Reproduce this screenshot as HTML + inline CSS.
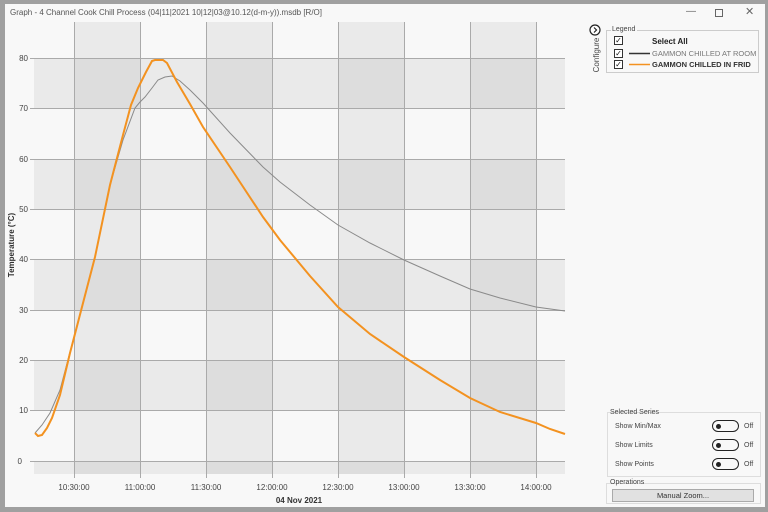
<!DOCTYPE html>
<html><head><meta charset="utf-8"><style>
*{margin:0;padding:0;box-sizing:border-box}
body{width:768px;height:512px;background:#a0a0a0;position:relative;overflow:hidden;font-family:"Liberation Sans",sans-serif}
.win{position:absolute;left:5px;top:4px;width:760px;height:503px;background:#f8f8f8}
.t{position:absolute;font-size:8px;color:#444;white-space:nowrap}
.cb{position:absolute;width:9px;height:9px;border:1px solid #333;background:#fff;font-size:8px;line-height:7px;text-align:center;color:#111}
.tog{position:absolute;width:27px;height:12px;border:1.3px solid #222;border-radius:6px}
.tog::after{content:"";position:absolute;left:3px;top:2.5px;width:5px;height:5px;border-radius:50%;background:#222}
</style></head><body>
<div class="win"></div>
<div class="t" style="left:10px;top:8px;color:#555">Graph - 4 Channel Cook Chill Process (04|11|2021 10|12|03@10.12(d-m-y)).msdb [R/O]</div>
<div class="t" style="left:686px;top:6px;font-size:10px;color:#666">—</div>
<div class="t" style="left:715px;top:5px;width:8px;height:8px;border:1px solid #666;top:9px"></div>
<div class="t" style="left:745px;top:5px;font-size:11px;color:#666">✕</div>
<svg width="768" height="512" style="position:absolute;left:0;top:0">
<g fill="rgba(0,0,0,0.055)">
<rect x="74" y="22" width="66" height="452"/><rect x="206" y="22" width="66" height="452"/><rect x="338" y="22" width="66" height="452"/><rect x="470" y="22" width="66" height="452"/>
<rect x="34" y="58" width="531" height="50"/><rect x="34" y="159" width="531" height="50"/><rect x="34" y="259" width="531" height="51"/><rect x="34" y="360" width="531" height="50"/><rect x="34" y="461" width="531" height="13"/>
</g>
<g stroke="#aaa" stroke-width="1">
<line x1="74.5" y1="22" x2="74.5" y2="478"/><line x1="140.5" y1="22" x2="140.5" y2="478"/><line x1="206.5" y1="22" x2="206.5" y2="478"/><line x1="272.5" y1="22" x2="272.5" y2="478"/><line x1="338.5" y1="22" x2="338.5" y2="478"/><line x1="404.5" y1="22" x2="404.5" y2="478"/><line x1="470.5" y1="22" x2="470.5" y2="478"/><line x1="536.5" y1="22" x2="536.5" y2="478"/>
<line x1="30" y1="58.5" x2="565" y2="58.5"/><line x1="30" y1="108.5" x2="565" y2="108.5"/><line x1="30" y1="159.5" x2="565" y2="159.5"/><line x1="30" y1="209.5" x2="565" y2="209.5"/><line x1="30" y1="259.5" x2="565" y2="259.5"/><line x1="30" y1="310.5" x2="565" y2="310.5"/><line x1="30" y1="360.5" x2="565" y2="360.5"/><line x1="30" y1="410.5" x2="565" y2="410.5"/><line x1="30" y1="461.5" x2="565" y2="461.5"/>
</g>
<path d="M35,433 L42,425 L50,413 L60,390 L70,352 L95,257 L110,185 L123,140 L135,108 L140,102 L145,97 L152,88 L158,80 L165,77 L172,76 L180,81 L190,90 L203,103 L230,133 L263,167 L280,182 L310,205 L338,225 L370,243 L404,260 L440,276 L470,289 L500,298 L536,307 L565,311" fill="none" stroke="#8a8a8a" stroke-width="1"/>
<path d="M35,433 L38,436 L42,435 L47,428 L52,418 L60,395 L70,353 L95,257 L110,185 L123,135 L131,105 L138,88 L146,72 L152,61 L155,60 L163,60 L167,63 L177,82 L190,104 L203,127 L230,167 L263,217 L280,240 L310,276 L338,307 L370,334 L404,357 L440,380 L470,398 L500,412 L536,423 L550,429 L565,434" fill="none" stroke="#f39220" stroke-width="2"/>
<text x="28" y="61" font-size="8" fill="#444" text-anchor="end" font-family="Liberation Sans">80</text>
<text x="28" y="111" font-size="8" fill="#444" text-anchor="end" font-family="Liberation Sans">70</text>
<text x="28" y="162" font-size="8" fill="#444" text-anchor="end" font-family="Liberation Sans">60</text>
<text x="28" y="212" font-size="8" fill="#444" text-anchor="end" font-family="Liberation Sans">50</text>
<text x="28" y="262" font-size="8" fill="#444" text-anchor="end" font-family="Liberation Sans">40</text>
<text x="28" y="313" font-size="8" fill="#444" text-anchor="end" font-family="Liberation Sans">30</text>
<text x="28" y="363" font-size="8" fill="#444" text-anchor="end" font-family="Liberation Sans">20</text>
<text x="28" y="413" font-size="8" fill="#444" text-anchor="end" font-family="Liberation Sans">10</text>
<text x="22" y="464" font-size="8" fill="#444" text-anchor="end" font-family="Liberation Sans">0</text>
<g font-size="8" fill="#444" text-anchor="middle" font-family="Liberation Sans">
<text x="74" y="490">10:30:00</text><text x="140" y="490">11:00:00</text><text x="206" y="490">11:30:00</text><text x="272" y="490">12:00:00</text><text x="338" y="490">12:30:00</text><text x="404" y="490">13:00:00</text><text x="470" y="490">13:30:00</text><text x="536" y="490">14:00:00</text>
</g>
<text x="299" y="503" font-size="8" font-weight="bold" fill="#333" text-anchor="middle" font-family="Liberation Sans">04 Nov 2021</text>
<text transform="translate(14,245) rotate(-90)" font-size="8" font-weight="bold" fill="#333" text-anchor="middle" font-family="Liberation Sans">Temperature (°C)</text>
<circle cx="595" cy="30" r="5" fill="#fff" stroke="#222" stroke-width="1.2"/>
<path d="M594,27.5 L596.5,30 L594,32.5" fill="none" stroke="#222" stroke-width="1.2"/>
<text transform="translate(599,55) rotate(-90)" font-size="8" fill="#444" text-anchor="middle" font-family="Liberation Sans">Configure</text>
<rect x="606.5" y="30.5" width="152" height="42" fill="none" stroke="#ccc"/>
<rect x="611" y="26" width="26" height="8" fill="#f8f8f8"/>
<rect x="607.5" y="412.5" width="153" height="64" fill="none" stroke="#ddd"/>
<rect x="606.5" y="483.5" width="154" height="20" fill="none" stroke="#ddd"/>
<line x1="629" y1="53.5" x2="650" y2="53.5" stroke="#333" stroke-width="1.5"/>
<line x1="629" y1="64.5" x2="650" y2="64.5" stroke="#f39220" stroke-width="1.5"/>
</svg>
<div class="t" style="left:612px;top:26px;font-size:7px">Legend</div>
<div class="cb" style="left:614px;top:36px">✓</div>
<div class="t" style="left:652px;top:37px;font-weight:bold;color:#222">Select All</div>
<div class="cb" style="left:614px;top:49px">✓</div>
<div class="t" style="left:652px;top:49px;color:#777;font-size:7.5px">GAMMON CHILLED AT ROOM</div>
<div class="cb" style="left:614px;top:60px">✓</div>
<div class="t" style="left:652px;top:60px;font-weight:bold;color:#333;font-size:7.5px">GAMMON CHILLED IN FRID</div>
<div class="t" style="left:610px;top:409px;font-size:7px">Selected Series</div>
<div class="t" style="left:615px;top:423px;font-size:7px">Show Min/Max</div>
<div class="t" style="left:615px;top:442px;font-size:7px">Show Limits</div>
<div class="t" style="left:615px;top:461px;font-size:7px">Show Points</div>
<div class="tog" style="left:712px;top:420px"></div><div class="t" style="left:744px;top:423px;font-size:7px">Off</div>
<div class="tog" style="left:712px;top:439px"></div><div class="t" style="left:744px;top:442px;font-size:7px">Off</div>
<div class="tog" style="left:712px;top:458px"></div><div class="t" style="left:744px;top:461px;font-size:7px">Off</div>
<div class="t" style="left:610px;top:479px;font-size:7px">Operations</div>
<div style="position:absolute;left:612px;top:489px;width:142px;height:13px;background:#e1e1e1;border:1px solid #aaa;font-size:7.5px;color:#333;text-align:center;line-height:11px">Manual Zoom...</div>
</body></html>
